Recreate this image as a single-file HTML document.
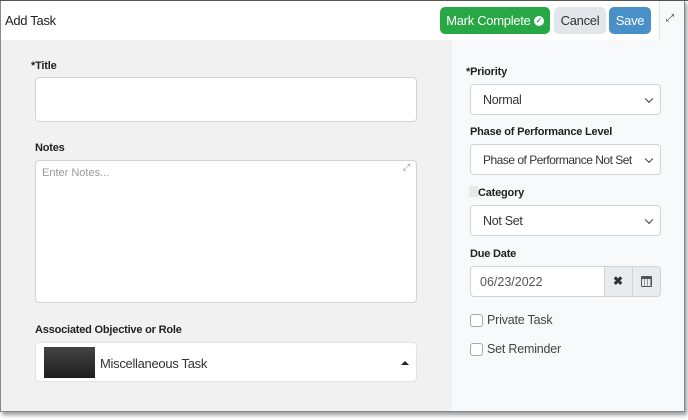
<!DOCTYPE html><html><head><style>
*{box-sizing:border-box;margin:0;padding:0}
body{width:688px;height:420px;background:#fff;font-family:"Liberation Sans",sans-serif;position:relative;overflow:hidden}
.a{position:absolute}
.win{left:0;top:0;width:685px;height:412px;border:1px solid #888;border-top:none;box-shadow:2px 3px 4px #999;background:#fff}
.lbl{font-size:11px;font-weight:bold;color:#222;letter-spacing:-0.2px}
.inp{background:#fff;border:1px solid #ced4da;border-radius:4px}
.sel{font-size:12.5px;color:#333;padding-left:12px;display:flex;align-items:center;letter-spacing:-0.3px}
.chev{position:absolute;right:8px;top:50%;width:6px;height:6px;border-right:1.3px solid #333;border-bottom:1.3px solid #333;transform:translateY(-70%) rotate(45deg)}
.btn{border-radius:5px;color:#fff;font-size:13px;display:flex;align-items:center;justify-content:center;letter-spacing:-0.3px}
.cb{width:13px;height:13px;border:1px solid #aaa;border-radius:3px;background:#fff}
</style></head><body>
<div class="a win"></div>
<div class="a" style="left:0;top:0;width:688px;height:1px;background:#555"></div>
<div class="a" style="left:1px;top:40px;width:451px;height:371px;background:#f1f1f1"></div>
<div class="a" style="left:452px;top:40px;width:232px;height:371px;background:#f8f9fa"></div>
<div class="a" style="left:659px;top:1px;width:25px;height:39px;background:#f8f9fa;border-left:1px solid #e5e5e5"></div>
<div class="a" style="left:5px;top:13px;font-size:13px;color:#222;letter-spacing:-0.3px">Add Task</div>
<div class="a btn" style="left:440px;top:7px;width:110px;height:27px;background:#28a745">Mark Complete&nbsp;<span style="display:inline-block;width:10px;height:10px;border-radius:50%;background:#fff;color:#28a745;font-size:8px;line-height:10px;text-align:center;font-weight:bold">✓</span></div>
<div class="a btn" style="left:554px;top:7px;width:52px;height:27px;background:#e2e6ea;color:#333">Cancel</div>
<div class="a btn" style="left:609px;top:7px;width:42px;height:27px;background:#4a90c8">Save</div>
<div class="a" style="left:666px;top:13px;font-size:10px;color:#333">⤢</div>
<div class="a lbl" style="left:31px;top:60px">*Title</div>
<div class="a inp" style="left:35px;top:77px;width:382px;height:45px"></div>
<div class="a lbl" style="left:35px;top:142px">Notes</div>
<div class="a inp" style="left:35px;top:160px;width:382px;height:143px"></div>
<div class="a" style="left:42px;top:167px;font-size:11px;color:#999">Enter Notes...</div>
<div class="a" style="left:403px;top:162px;font-size:9px;color:#888">⤢</div>
<div class="a lbl" style="left:35px;top:324px">Associated Objective or Role</div>
<div class="a inp" style="left:35px;top:342px;width:382px;height:40px;border-color:#e3e3e3"></div>
<div class="a" style="left:44px;top:347px;width:51px;height:31px;background:linear-gradient(#444,#1e1e1e)"></div>
<div class="a" style="left:100px;top:356px;font-size:13px;color:#333;letter-spacing:-0.3px">Miscellaneous Task</div>
<div class="a" style="left:401px;top:361px;width:0;height:0;border-left:4px solid transparent;border-right:4px solid transparent;border-bottom:4px solid #222"></div>
<div class="a lbl" style="left:466px;top:66px">*Priority</div>
<div class="a inp sel" style="left:470px;top:84px;width:191px;height:31px">Normal<span class="chev"></span></div>
<div class="a lbl" style="left:470px;top:126px">Phase of Performance Level</div>
<div class="a inp sel" style="left:470px;top:144px;width:191px;height:31px;letter-spacing:-0.5px;font-size:12px">Phase of Performance Not Set<span class="chev"></span></div>
<div class="a" style="left:469px;top:186px;width:9px;height:11px;background:#e9e9e9"></div>
<div class="a lbl" style="left:478px;top:187px">Category</div>
<div class="a inp sel" style="left:470px;top:205px;width:191px;height:31px">Not Set<span class="chev"></span></div>
<div class="a lbl" style="left:470px;top:248px">Due Date</div>
<div class="a inp" style="left:470px;top:266px;width:191px;height:31px;background:#e9ecef"></div>
<div class="a inp" style="left:470px;top:266px;width:135px;height:31px;border-radius:4px 0 0 4px;font-size:12.5px;color:#555;padding:8px 0 0 9px">06/23/2022</div>
<div class="a" style="left:613px;top:274px;font-size:12px;font-weight:bold;color:#333">✖</div>
<div class="a" style="left:632px;top:266px;width:1px;height:31px;background:#ced4da"></div>
<div class="a" style="left:641px;top:276px;width:11px;height:11px;border:1.2px solid #555;border-top-width:3px;border-radius:1px;background:repeating-linear-gradient(90deg,transparent 0 2px,#999 2px 3px)"></div>
<div class="a cb" style="left:470px;top:314px"></div>
<div class="a" style="left:487px;top:313px;font-size:12.5px;color:#444;letter-spacing:-0.2px">Private Task</div>
<div class="a cb" style="left:470px;top:343px"></div>
<div class="a" style="left:487px;top:342px;font-size:12.5px;color:#444;letter-spacing:-0.2px">Set Reminder</div>
</body></html>
